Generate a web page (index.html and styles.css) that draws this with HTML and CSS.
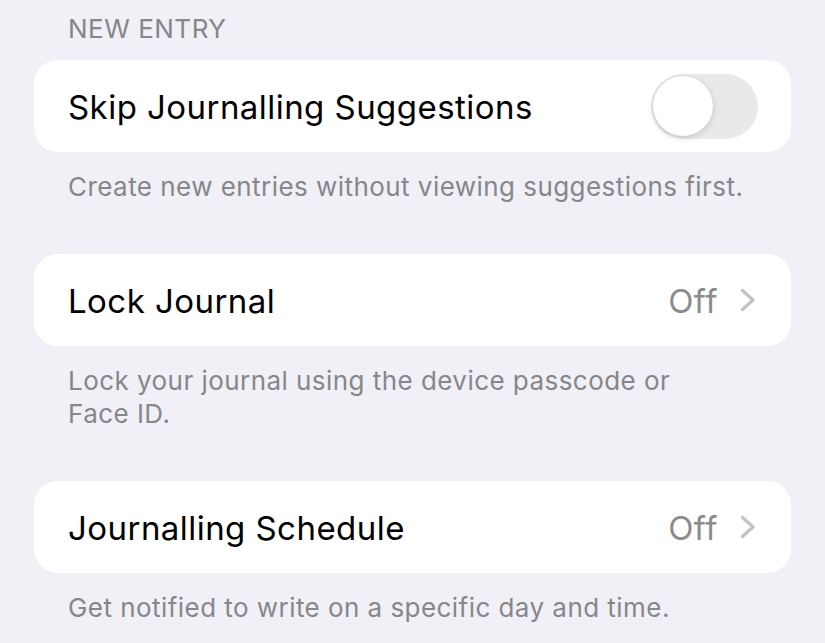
FILE: index.html
```html
<!DOCTYPE html>
<html lang="en">
<head>
<meta charset="utf-8">
<title>Journal Settings</title>
<link rel="stylesheet" href="styles.css">
</head>
<body>
<main class="page">
  <section class="group">
    <h2 class="group-header">NEW ENTRY</h2>
    <div class="card">
      <div class="row">
        <span class="row-label">Skip Journalling Suggestions</span>
        <span class="toggle"><span class="knob"></span></span>
      </div>
    </div>
    <p class="group-footer">Create new entries without viewing suggestions first.</p>
  </section>

  <section class="group">
    <div class="card">
      <div class="row">
        <span class="row-label">Lock Journal</span>
        <span class="row-value">Off
          <svg class="chevron" viewBox="0 0 16 24" width="16" height="24"><path d="M2.5 2.5 L13 12 L2.5 21.5" fill="none" stroke="#c4c4c7" stroke-width="3.4" stroke-linecap="round" stroke-linejoin="round"/></svg>
        </span>
      </div>
    </div>
    <p class="group-footer">Lock your journal using the device passcode or<br>Face ID.</p>
  </section>

  <section class="group">
    <div class="card">
      <div class="row">
        <span class="row-label">Journalling Schedule</span>
        <span class="row-value">Off
          <svg class="chevron" viewBox="0 0 16 24" width="16" height="24"><path d="M2.5 2.5 L13 12 L2.5 21.5" fill="none" stroke="#c4c4c7" stroke-width="3.4" stroke-linecap="round" stroke-linejoin="round"/></svg>
        </span>
      </div>
    </div>
    <p class="group-footer">Get notified to write on a specific day and time.</p>
  </section>
</main>
</body>
</html>
```

FILE: styles.css
```css
html, body {
  margin: 0;
  padding: 0;
  background: #f1f0f6;
}
body {
  font-family: Inter, "Noto Sans", "Liberation Sans", sans-serif;
  color: #000;
  -webkit-font-smoothing: antialiased;
}
.page {
  padding: 13px 34px 0 34px;
  display: flex;
  flex-direction: column;
}
.group {
  display: flex;
  flex-direction: column;
}
.group-header {
  margin: 0 0 0 34px;
  font-size: 26px;
  font-weight: 400;
  color: #86868b;
  line-height: 32px;
  letter-spacing: 0.5px;
  height: 47px;
}
.card {
  background: #ffffff;
  border-radius: 24px;
  height: 92px;
  display: flex;
  align-items: center;
}
.row {
  flex: 1;
  display: flex;
  align-items: center;
  justify-content: space-between;
  padding: 2px 33px 0 34px;
}
.row-label {
  font-size: 33px;
  letter-spacing: 0.45px;
  line-height: 40px;
}
.row-value {
  display: flex;
  align-items: center;
  gap: 22px;
  font-size: 33px;
  letter-spacing: 0.5px;
  color: #8b8b90;
  line-height: 40px;
  margin-right: 2px;
}
.chevron {
  display: block;
  margin-top: -2px;
}
.toggle {
  position: relative;
  width: 107px;
  height: 65px;
  margin-top: -2px;
  border-radius: 33px;
  background: #e9e9eb;
}
.knob {
  position: absolute;
  left: 2px;
  top: 2.5px;
  width: 60px;
  height: 60px;
  border-radius: 50%;
  background: #fff;
  box-shadow: 0 2px 6px rgba(0,0,0,0.15), 0 0 1px rgba(0,0,0,0.12);
}
.group-footer {
  margin: 18px 0 51px 34px;
  font-size: 26px;
  line-height: 33px;
  color: #86868b;
  letter-spacing: 0.45px;
}
```
